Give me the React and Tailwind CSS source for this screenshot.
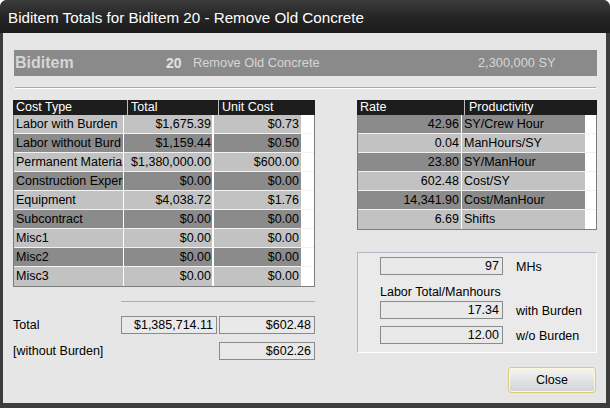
const costRows = [
  ['Labor with Burden', '$1,675.39', '$0.73'],
  ['Labor without Burd', '$1,159.44', '$0.50'],
  ['Permanent Materia', '$1,380,000.00', '$600.00'],
  ['Construction Exper', '$0.00', '$0.00'],
  ['Equipment', '$4,038.72', '$1.76'],
  ['Subcontract', '$0.00', '$0.00'],
  ['Misc1', '$0.00', '$0.00'],
  ['Misc2', '$0.00', '$0.00'],
  ['Misc3', '$0.00', '$0.00'],
];

const rateRows = [
  ['42.96', 'SY/Crew Hour'],
  ['0.04', 'ManHours/SY'],
  ['23.80', 'SY/ManHour'],
  ['602.48', 'Cost/SY'],
  ['14,341.90', 'Cost/ManHour'],
  ['6.69', 'Shifts'],
];

function Field({ value, className }) {
  return (
    <div className={'h-[18px] border border-[#8a8a8a] bg-[#e9e9e9] text-right pr-[3px] leading-[16px] whitespace-nowrap ' + (className || '')}>
      {value}
    </div>
  );
}

export default function App() {
  return (
    <div
      className="w-[610px] h-[408px] flex flex-col bg-[#2a2a2a] rounded-t-[7px] overflow-hidden text-[12.5px] text-black"
      style={{ fontFamily: '"Liberation Sans", Arial, sans-serif' }}
    >
      {/* title bar */}
      <div className="h-[33px] shrink-0 bg-linear-to-b from-[#3c3c3c] via-[#262626] to-[#1b1b1b] flex items-center pl-[8px] pt-[3px]">
        <span className="text-white text-[15.2px]">Biditem Totals for Biditem 20 - Remove Old Concrete</span>
      </div>

      <div className="flex-1 bg-[#e6e6e6] border-l-[3px] border-r-[4px] border-b-[5px] border-[#3d3d3d] pl-[10px] pt-[17px]">
        {/* banner */}
        <div className="ml-[1px] w-[583px] h-[26px] bg-[#8a8a8a] flex items-center text-[#d6d6d6]">
          <span className="w-[152px] pl-[1px] font-bold text-[16px]">Biditem</span>
          <span className="w-[27px] font-bold text-[14px] text-[#e2e2e2]">20</span>
          <span className="w-[285px] text-[12.8px]">Remove Old Concrete</span>
          <span className="text-[12.8px]">2,300,000 SY</span>
        </div>

        <div className="ml-[2px] w-[581px] mt-[11px] h-[2px] border-t border-[#a4acba] border-b border-b-white" />

        <div className="flex mt-[11px]">
          {/* left column */}
          <div className="w-[302px] flex flex-col">
            <div className="border border-[#7c7c7c] bg-white">
              <div className="flex h-[15px] bg-[#1d1d1d] text-white leading-[15px] -mx-px -mt-px">
                <div className="w-[115px] pl-[3px] border-r border-[#bdbdbd]">Cost Type</div>
                <div className="w-[91px] pl-[3px] border-r border-[#bdbdbd]">Total</div>
                <div className="flex-1 pl-[3px]">Unit Cost</div>
              </div>
              {costRows.map((r, i) => {
                const bg = i % 2 === 0 ? 'bg-[#c2c2c2]' : 'bg-[#8b8b8b]';
                return (
                  <div key={r[0]} className="flex h-[19px] border-b border-[#f2f2f2] last:border-b-0 leading-[18px]">
                    <div className={'w-[109px] pl-[2px] whitespace-nowrap overflow-hidden ' + bg}>{r[0]}</div>
                    <div className={'w-[88px] ml-px pr-[1px] text-right whitespace-nowrap ' + bg}>{r[1]}</div>
                    <div className={'w-[87px] ml-[2px] pr-[2px] text-right ' + bg}>{r[2]}</div>
                  </div>
                );
              })}
            </div>

            <div className="ml-[108px] w-[194px] mt-[14px] h-px bg-[#a8b0bf]" />

            <div className="flex items-center mt-[14px]">
              <span className="w-[108px]">Total</span>
              <Field value="$1,385,714.11" className="w-[96px]" />
              <Field value="$602.48" className="w-[96px] ml-[2px]" />
            </div>
            <div className="flex items-center mt-[7px]">
              <span className="w-[206px]">[without Burden]</span>
              <Field value="$602.26" className="w-[96px]" />
            </div>
          </div>

          {/* right column */}
          <div className="w-[240px] ml-[42px] flex flex-col">
            <div className="border border-[#7c7c7c] bg-white">
              <div className="flex h-[15px] bg-[#1d1d1d] text-white leading-[15px] -mx-px -mt-px">
                <div className="w-[108px] pl-[3px] border-r border-[#bdbdbd]">Rate</div>
                <div className="flex-1 pl-[4px]">Productivity</div>
              </div>
              {rateRows.map((r, i) => {
                const bg = i % 2 === 0 ? 'bg-[#8b8b8b]' : 'bg-[#c2c2c2]';
                return (
                  <div key={r[1]} className="flex h-[19px] border-b border-[#f2f2f2] last:border-b-0 leading-[18px] whitespace-nowrap">
                    <div className={'w-[103px] pr-[2px] text-right ' + bg}>{r[0]}</div>
                    <div className={'w-[123px] ml-px pl-[2px] ' + bg}>{r[1]}</div>
                  </div>
                );
              })}
            </div>

            <div className="mt-[22px] h-[101px] border border-[#b2b8c4] border-b-white border-r-white bg-[#eaeaea] pl-[22px] pt-[3px]">
              <div className="flex items-center">
                <Field value="97" className="w-[123px]" />
                <span className="ml-[13px] mt-[2px]">MHs</span>
              </div>
              <div className="mt-[8px] leading-[14px]">Labor Total/Manhours</div>
              <div className="flex items-end mt-[2px]">
                <Field value="17.34" className="w-[123px]" />
                <span className="ml-[13px] -mb-[2px]">with Burden</span>
              </div>
              <div className="flex items-end mt-[7px]">
                <Field value="12.00" className="w-[123px]" />
                <span className="ml-[13px] -mb-[2px]">w/o Burden</span>
              </div>
            </div>

            <div className="flex justify-end mt-[14px]">
              <button className="w-[88px] h-[26px] mr-px rounded-[3px] border border-[#dcc878] bg-linear-to-b from-[#f4f4f4] via-[#e2e4e6] to-[#cfd4d8] shadow-[inset_0_0_0_1px_#fbf6dc] text-[12.5px]">
                Close
              </button>
            </div>
          </div>
        </div>
      </div>
    </div>
  );
}
